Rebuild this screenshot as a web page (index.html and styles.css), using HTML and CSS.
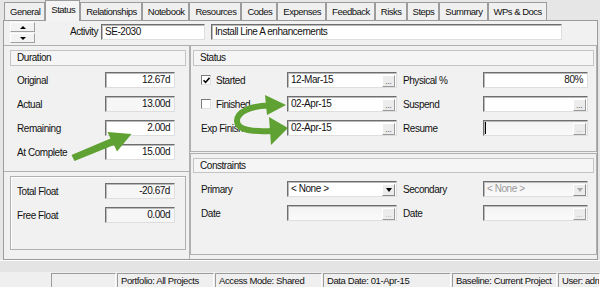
FILE: index.html
```html
<!DOCTYPE html>
<html>
<head>
<meta charset="utf-8">
<link rel="stylesheet" href="styles.css">
</head>
<body>
<div class="tabs">
  <div class="tab">General</div>
  <div class="tab active">Status</div>
  <div class="tab">Relationships</div>
  <div class="tab">Notebook</div>
  <div class="tab">Resources</div>
  <div class="tab">Codes</div>
  <div class="tab">Expenses</div>
  <div class="tab">Feedback</div>
  <div class="tab">Risks</div>
  <div class="tab">Steps</div>
  <div class="tab">Summary</div>
  <div class="tab">WPs &amp; Docs</div>
</div>
<div class="page">
  <div class="toprow">
    <div class="spinner">
      <div class="spin"><span class="tri-up"></span></div>
      <div class="spin"><span class="tri-down"></span></div>
    </div>
    <span class="act-label">Activity</span>
    <div class="field w-id"><span class="val">SE-2030</span></div>
    <div class="field w-name"><span class="val">Install Line A enhancements</span></div>
  </div>
  <div class="body">
    <div class="col-left">
      <div class="dur">
        <div class="ghead">Duration</div>
        <div class="dgrid">
          <span class="lbl">Original</span>
          <div class="field w-num"><span class="val right">12.67d</span></div>
          <span class="lbl">Actual</span>
          <div class="field w-num ro"><span class="val right">13.00d</span></div>
          <span class="lbl">Remaining</span>
          <div class="field w-num"><span class="val right">2.00d</span></div>
          <span class="lbl">At Complete</span>
          <div class="field w-num"><span class="val right">15.00d</span></div>
        </div>
      </div>
      <div class="floatwrap">
        <div class="floatbox">
          <div class="dgrid">
            <span class="lbl">Total Float</span>
            <div class="field w-num ro"><span class="val right">-20.67d</span></div>
            <span class="lbl">Free Float</span>
            <div class="field w-num ro"><span class="val right">0.00d</span></div>
          </div>
        </div>
      </div>
    </div>
    <div class="col-right">
      <div class="grp status">
        <div class="ghead">Status</div>
        <div class="sgrid">
          <span class="lbl chk-lbl"><span class="chk on"><svg viewBox="0 0 7 7" width="7" height="7"><path d="M0.5 3.2 L2.6 5.4 L6.5 0.8" fill="none" stroke="#000" stroke-width="1.6"/></svg></span>Started</span>
          <div class="field w-date"><span class="val">12-Mar-15</span><span class="dots">...</span></div>
          <span class="lbl lbl2">Physical %</span>
          <div class="field w-r"><span class="val right">80%</span></div>

          <span class="lbl chk-lbl"><span class="chk"></span>Finished</span>
          <div class="field w-date"><span class="val">02-Apr-15</span><span class="dots">...</span></div>
          <span class="lbl lbl2">Suspend</span>
          <div class="field w-r"><span class="val"></span><span class="dots">...</span></div>

          <span class="lbl">Exp Finish</span>
          <div class="field w-date"><span class="val">02-Apr-15</span><span class="dots">...</span></div>
          <span class="lbl lbl2">Resume</span>
          <div class="field w-r dis"><span class="val caret"></span><span class="dots off">...</span></div>
        </div>
      </div>
      <div class="grp cons">
        <div class="ghead">Constraints</div>
        <div class="sgrid">
          <span class="lbl">Primary</span>
          <div class="field w-date"><span class="val">&lt; None &gt;</span><span class="drop"><span class="tri-down"></span></span></div>
          <span class="lbl lbl2">Secondary</span>
          <div class="field w-r dis"><span class="val grey">&lt; None &gt;</span><span class="drop off"><span class="tri-down"></span></span></div>

          <span class="lbl">Date</span>
          <div class="field w-date dis"><span class="val"></span><span class="dots off">...</span></div>
          <span class="lbl lbl2">Date</span>
          <div class="field w-r dis"><span class="val"></span><span class="dots off">...</span></div>
        </div>
      </div>
    </div>
  </div>
</div>
<div class="band"></div>
<div class="statusbar">
  <span class="seg s0"></span>
  <span class="seg s1"></span>
  <span class="seg s2">Portfolio: All Projects</span>
  <span class="seg s3">Access Mode: Shared</span>
  <span class="seg s4">Data Date: 01-Apr-15</span>
  <span class="seg s5">Baseline: Current Project</span>
  <span class="seg s6">User: admin</span>
</div>
<svg class="arrows" width="600" height="287" viewBox="0 0 600 287">
  <g fill="#5fa132">
    <polygon points="71.5,155 110.5,138.5 107.5,132 131.5,134 117,151.5 114,145 74.5,161"/>
    <polygon points="265,95 286,105 267,115"/>
    <polygon points="269,117 288,128 271,145"/>
  </g>
  <path d="M269,105.5 C252,106 237,111 237,121 C237,130 252,132 272,131" fill="none" stroke="#5fa132" stroke-width="6"/>
</svg>
</body>
</html>
```
FILE: styles.css
```css
* { box-sizing: border-box; }
html, body { margin: 0; padding: 0; }
body {
  width: 600px;
  height: 287px;
  overflow: hidden;
  position: relative;
  background: #e6e6e6;
  font-family: "Liberation Sans", Arial, sans-serif;
  font-size: 10px;
  letter-spacing: -0.45px;
  color: #111;
}
.tabs {
  display: flex;
  align-items: flex-end;
  height: 20px;
  padding-left: 4px;
  background: #e6e6e6;
  font-size: 9.5px;
  letter-spacing: -0.5px;
}
.tab {
  height: 18px;
  padding: 0 4px 0 5px;
  line-height: 17px;
  border: 1px solid #9c9c9c;
  border-bottom: 0;
  background: #f0f0f0;
  white-space: nowrap;
}
.active {
  height: 21px;
  line-height: 18px;
  background: #f4f4f4;
  position: relative;
  margin-bottom: -1px;
  z-index: 2;
}
.page {
  height: 240px;
  margin-left: 3px;
  margin-right: 2px;
  border: 1px solid #9c9c9c;
  background: #f1f1f1;
}
.toprow {
  display: flex;
  height: 24px;
  padding-left: 6px;
}
.spinner {
  width: 25px;
  height: 21px;
  margin-top: 1px;
  display: flex;
  flex-direction: column;
  gap: 1px;
}
.spin {
  flex: 1;
  border: 1px solid;
  border-color: #fff #a0a0a0 #a0a0a0 #fff;
  background: #f3f3f3;
  display: flex;
  align-items: center;
  justify-content: center;
}
.tri-up {
  width: 0; height: 0;
  border-left: 3px solid transparent;
  border-right: 3px solid transparent;
  border-bottom: 3px solid #000;
}
.tri-down {
  width: 0; height: 0;
  border-left: 3px solid transparent;
  border-right: 3px solid transparent;
  border-top: 3px solid #000;
}
.act-label {
  width: 63px;
  text-align: right;
  margin-right: 3px;
  line-height: 22px;
}
.field {
  display: flex;
  align-items: flex-start;
  height: 16px;
  border-top: 1px solid #6e6e6e;
  border-left: 1px solid #6e6e6e;
  border-right: 1px solid #dedede;
  border-bottom: 1px solid #dedede;
  box-shadow: inset 1px 1px 0 #b9b9b9;
  background: #fff;
}
.toprow .field { margin-top: 3px; }
.w-id { width: 104px; }
.w-name { width: 351px; margin-left: 6px; }
.w-num { width: 70px; }
.w-date { width: 110px; }
.w-r { width: 105px; }
.ro { background: #f6f6f6; }
.dis { background: linear-gradient(#f3f3f3, #fafafa); }
.val {
  flex: 1;
  padding: 0 4px 0 3px;
  line-height: 14px;
  white-space: nowrap;
  overflow: hidden;
}
.right { text-align: right; }
.grey { color: #9a9a9a; }
.dis .caret { flex: 1; border-left: 1px solid #000; margin: 1px 0 1px 1px; height: 12px; padding: 0; }
.dots {
  width: 13px;
  height: 12px;
  margin: 2px 1px 0 0;
  border: 1px solid;
  border-color: #fff #9a9a9a #9a9a9a #fff;
  background: #ececec;
  font-size: 8px;
  letter-spacing: 0;
  line-height: 11px;
  text-align: center;
  color: #333;
}
.dots.off { color: #b0b0b0; }
.drop {
  width: 13px;
  height: 12px;
  margin: 2px 1px 0 0;
  border: 1px solid;
  border-color: #fff #8a8a8a #8a8a8a #fff;
  background: #ececec;
  display: flex;
  align-items: center;
  justify-content: center;
}
.drop .tri-down { border-left-width: 3px; border-right-width: 3px; border-top-width: 4px; }
.drop.off .tri-down { border-top-color: #a8a8a8; }
.body {
  display: flex;
  height: 214px;
}
.col-left {
  width: 186px;
  display: flex;
  flex-direction: column;
}
.dur {
  height: 127px;
  border-top: 1px solid #b0b0b0;
  border-right: 1px solid #b0b0b0;
  border-bottom: 1px solid #b0b0b0;
  padding: 4px 3px 0 6px;
}
.ghead {
  height: 16px;
  border: 1px solid #c4c4c4;
  background: #f5f5f5;
  padding-left: 6px;
  line-height: 14px;
}
.dgrid {
  display: grid;
  grid-template-columns: 88px 70px;
  row-gap: 8px;
  align-items: center;
  padding: 6px 0 0 7px;
}
.lbl { white-space: nowrap; }
.floatwrap {
  flex: 1;
  border-right: 1px solid #b0b0b0;
  padding: 4px 3px 0 6px;
}
.floatbox {
  height: 74px;
  border: 1px solid #b0b0b0;
  box-shadow: inset 1px 1px 0 #fff;
}
.floatbox .dgrid { padding: 6px 0 0 6px; }
.col-right {
  width: 407px;
  display: flex;
  flex-direction: column;
}
.grp {
  border: 1px solid #b0b0b0;
  padding: 4px 2px 0 2px;
}
.status { height: 107px; }
.cons { height: 102px; margin-top: 1px; }
.cons .ghead { height: 15px; }
.sgrid {
  display: grid;
  grid-template-columns: 86px 110px 86px 105px;
  row-gap: 8px;
  align-items: center;
  padding: 6px 0 0 8px;
}
.cons .sgrid { padding-top: 8px; }
.lbl2 { padding-left: 6px; }
.chk-lbl { display: flex; align-items: center; }
.chk {
  width: 10px;
  height: 10px;
  margin-right: 5px;
  border-top: 1px solid #7a7a7a;
  border-left: 1px solid #7a7a7a;
  border-right: 1px solid #e0e0e0;
  border-bottom: 1px solid #e0e0e0;
  background: #fff;
  display: flex;
  align-items: center;
  justify-content: center;
}
.band {
  height: 12px;
  border-top: 1px solid #fff;
  background: #e4e4e4;
}
.statusbar {
  display: flex;
  height: 15px;
  background: #efefef;
  padding-top: 1px;
  font-size: 9.5px;
  letter-spacing: -0.4px;
}
.seg {
  height: 14px;
  border-top: 1px solid #9c9c9c;
  border-left: 1px solid #9c9c9c;
  border-right: 1px solid #fff;
  line-height: 13px;
  padding-left: 3px;
  white-space: nowrap;
  overflow: hidden;
  margin-right: 1px;
}
.s0 { width: 50px; border: 0; }
.s1 { width: 65px; }
.s2 { width: 97px; }
.s3 { width: 107px; }
.s4 { width: 128px; }
.s5 { width: 105px; }
.s6 { flex: 1; margin-right: 0; }
.arrows {
  position: absolute;
  left: 0;
  top: 0;
  pointer-events: none;
}
```
